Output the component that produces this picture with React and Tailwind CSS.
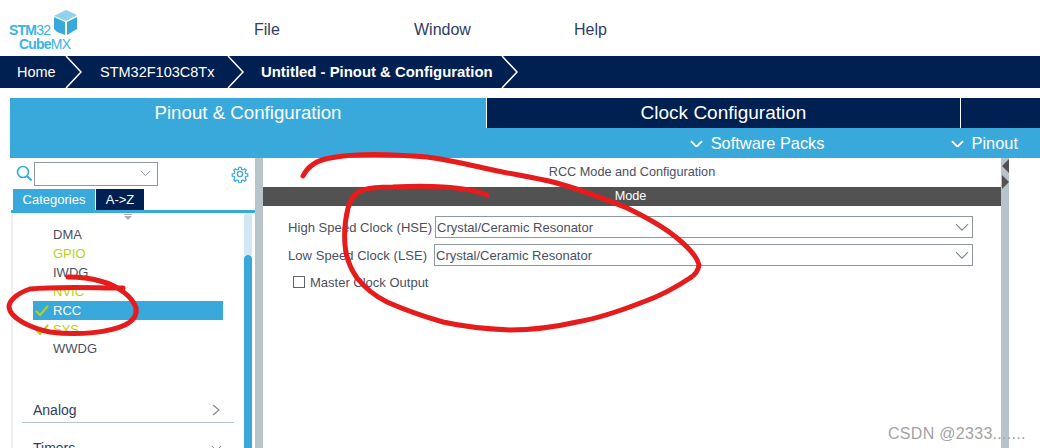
import React from 'react'

const FONT = "font-['Liberation_Sans',Arial,sans-serif]"
const TEXT = 'text-[#4b4f63]'

const Crumb = ({ children, className, bold }) => (
  <div className={`flex items-center h-full pt-[1px] ${className}`}>
    <span className={`text-white whitespace-nowrap ${bold ? 'font-bold text-[14.9px]' : 'text-[14.5px]'}`}>{children}</span>
  </div>
)

const CrumbArrow = () => (
  <svg width="18" height="32" viewBox="0 0 18 32" fill="none" className="shrink-0">
    <path d="M1 0 L16 16 L1 32" stroke="#fff" strokeWidth="1.5" />
  </svg>
)

const Chevron = ({ size = 14, stroke = '#808a90', width = 1.2 }) => (
  <svg width={size} height={size * 0.6} viewBox="0 0 14 8" fill="none" className="shrink-0">
    <path d="M1 1 L7 7 L13 1" stroke={stroke} strokeWidth={width} />
  </svg>
)

const Logo = () => (
  <div className="relative w-[80px] h-[56px] shrink-0">
    <svg width="26" height="36" viewBox="0 0 26 36" className="absolute left-[53px] top-[9px]">
      <path d="M1 7 L13 1 L24 6 L13 12 Z" fill="#8fd2ef" />
      <path d="M1 8 L12 13 L12 26 L4 23 L1 20 Z" fill="#39a9dc" />
      <path d="M14 13 L24 8 L24 20 L14 26 Z" fill="#39a9dc" />
    </svg>
    <div className="absolute left-[9px] top-[22px] text-[#39b4e6] text-[14px] leading-[16px] tracking-[-0.8px] whitespace-nowrap">
      <span className="font-bold">STM</span><span>32</span>
    </div>
    <div className="absolute left-[19px] top-[36px] text-[#39b4e6] text-[14px] leading-[16px] tracking-[-0.8px] whitespace-nowrap">
      <span className="font-bold">Cube</span><span>MX</span>
    </div>
  </div>
)

const ListItem = ({ label, color = TEXT, selected, check }) => (
  <div className={`relative h-[19px] w-[190px] ml-[20px] pl-[20px] flex items-center text-[13px] ${color} ${selected ? 'bg-[#39a9dc]' : ''}`}>
    {check && (
      <svg width="14" height="12" viewBox="0 0 14 12" fill="none" className="absolute left-[2px] top-[4px]">
        <path d="M1 6 L5 10 L13 1" stroke="#b5d312" strokeWidth="2" />
      </svg>
    )}
    {label}
  </div>
)

const SelectRow = ({ label, selectClass }) => (
  <div className="flex items-center h-[22px]">
    <span className={`pl-[25px] pt-[1px] text-[13px] tracking-[0.05px] whitespace-nowrap ${TEXT} ${selectClass}`}>{label}</span>
    <div className={`flex items-center justify-between flex-1 mr-[28px] h-[22px] border border-[#8f989e] bg-white pl-[1px] pr-[3px] pt-[1px] text-[13px] ${TEXT}`}>
      <span>Crystal/Ceramic Resonator</span>
      <Chevron />
    </div>
  </div>
)

const App = () => {
  return (
    <div className={`relative w-[1040px] h-[448px] overflow-hidden bg-white ${FONT}`}>
      {/* top menu */}
      <div className="flex items-center h-[56px]">
        <Logo />
        <div className="flex items-center pl-[174px] pt-[4px] text-[16px] text-[#2f3d63]">
          <span className="w-[160px]">File</span>
          <span className="w-[160px]">Window</span>
          <span>Help</span>
        </div>
      </div>

      {/* breadcrumb */}
      <div className="flex items-center h-[32px] bg-[#002052]">
        <Crumb className="pl-[17px] w-[65px]">Home</Crumb>
        <CrumbArrow />
        <Crumb className="pl-[17px] w-[144px]">STM32F103C8Tx</Crumb>
        <CrumbArrow />
        <Crumb bold className="pl-[16px] w-[256px]">Untitled - Pinout &amp; Configuration</Crumb>
        <CrumbArrow />
      </div>

      {/* tabs */}
      <div className="ml-[10px] mt-[10px]">
        <div className="flex h-[30px]">
          <div className="w-[476px] pt-[1px] bg-[#39a9dc] text-white text-[18.7px] flex items-center justify-center">Pinout &amp; Configuration</div>
          <div className="w-[474px] pt-[1px] bg-[#002052] text-white text-[19px] flex items-center justify-center border-l border-white">Clock Configuration</div>
          <div className="flex-1 bg-[#002052] border-l border-white" />
        </div>
        <div className="flex items-center justify-end h-[30px] pt-[1px] bg-[#39a9dc] text-white text-[16.4px]">
          <Chevron stroke="#fff" width={2} size={13} />
          <span className="ml-[8px] mr-[126px]">Software Packs</span>
          <Chevron stroke="#fff" width={2} size={13} />
          <span className="ml-[8px] mr-[22px]">Pinout</span>
        </div>
      </div>

      {/* body */}
      <div className="flex ml-[10px] h-[290px]">
        {/* left panel */}
        <div className="w-[245px] shrink-0">
          <div className="flex items-center h-[31px] pl-[6px]">
            <svg width="17" height="17" viewBox="0 0 17 17" fill="none" className="shrink-0">
              <circle cx="7" cy="7" r="5.5" stroke="#39a9dc" strokeWidth="1.6" />
              <path d="M11 11 L15.5 15.5" stroke="#39a9dc" strokeWidth="2" />
            </svg>
            <div className="flex items-center justify-end w-[124px] h-[24px] ml-[1px] border border-[#8f989e] pr-[6px]">
              <Chevron size={11} />
            </div>
            <svg width="18" height="18" viewBox="0 0 24 24" fill="none" stroke="#39a9dc" strokeWidth="1.8" className="ml-[73px] shrink-0">
              <circle cx="12" cy="12" r="3.5" />
              <path d="M10.3 2h3.4l.5 3 2.2.9 2.5-1.7 2.4 2.4-1.7 2.5.9 2.2 3 .5v3.4l-3 .5-.9 2.2 1.7 2.5-2.4 2.4-2.5-1.7-2.2.9-.5 3h-3.4l-.5-3-2.2-.9-2.5 1.7-2.4-2.4 1.7-2.5-.9-2.2-3-.5v-3.4l3-.5.9-2.2-1.7-2.5 2.4-2.4 2.5 1.7 2.2-.9z" transform="translate(1.2 1.2) scale(.9)" />
            </svg>
          </div>
          <div className="flex h-[21px] pl-[3px] text-[13px] text-white">
            <div className="w-[82px] bg-[#39a9dc] flex items-center justify-center">Categories</div>
            <div className="w-[48px] ml-[1px] bg-[#002052] flex items-center justify-center">A-&gt;Z</div>
          </div>
          <div className="ml-[1px] h-[3px] bg-[#39a9dc]" />
          <div className="relative flex h-[235px] ml-[1px] border-l-2 border-[#eeeeee]">
            <div className="flex-1 relative">
              <div className="flex justify-center w-[230px] h-[12px] pt-[1px]">
                <div className="flex flex-col items-center">
                  <div className="w-[8px] h-[1px] bg-[#b0b0b0]" />
                  <div className="w-0 h-0 mt-[1px] border-x-[4px] border-x-transparent border-t-[4px] border-t-[#b0b0b0]" />
                </div>
              </div>
              <ListItem label="DMA" />
              <ListItem label="GPIO" color="text-[#b5d312]" />
              <ListItem label="IWDG" />
              <ListItem label="NVIC" color="text-[#b5d312]" />
              <ListItem label="RCC" color="text-white" selected check />
              <ListItem label="SYS" color="text-[#b5d312]" check />
              <ListItem label="WWDG" />
              <div className="flex items-center justify-between h-[23px] mt-[42px] ml-[9px] pl-[11px] pr-[14px] pb-[2px] w-[212px] border-b border-[#b8c4cb] text-[14px] text-[#2f3d63]">
                <span>Analog</span>
                <svg width="8" height="12" viewBox="0 0 8 12" fill="none">
                  <path d="M1 1 L7 6 L1 11" stroke="#808a90" strokeWidth="1.2" />
                </svg>
              </div>
              <div className="flex items-center justify-between mt-[15px] ml-[9px] w-[212px] pl-[11px] pr-[12px] text-[14px] text-[#2f3d63]">
                <span>Timers</span>
                <Chevron size={11} />
              </div>
            </div>
            <div className="w-[8px] shrink-0 mr-[3px] flex flex-col">
              <div className="h-[42px] bg-[#d4e6f5] rounded-t-[4px]" />
              <div className="flex-1 bg-[#39a9dc] rounded-t-[4px]" />
            </div>
          </div>
        </div>

        {/* divider */}
        <div className="w-[8px] shrink-0 bg-[#b8c4cb]" />

        {/* right panel */}
        <div className="w-[738px] shrink-0">
          <div className={`flex items-center justify-center h-[29px] pt-[1px] text-[12.7px] ${TEXT}`}>RCC Mode and Configuration</div>
          <div className="flex items-center justify-center h-[19px] pr-[3px] bg-[#525252] text-white text-[12.7px]">Mode</div>
          <div className="flex flex-col gap-[6px] mt-[10px]">
            <SelectRow label="High Speed Clock (HSE)" selectClass="w-[172px]" />
            <SelectRow label="Low Speed Clock (LSE)" selectClass="w-[171px]" />
          </div>
          <label className={`flex items-center gap-[5px] mt-[5px] ml-[30px] h-[22px] text-[13px] ${TEXT}`}>
            <span className="w-[12px] h-[12px] border border-[#5f6468] bg-white" />
            <span className="pt-[1px]">Master Clock Output</span>
          </label>
        </div>

        {/* right scrollbar */}
        <div className="relative w-[8px] shrink-0 bg-[#b8c4cb]">
          <div className="absolute left-[1px] top-[1px] w-0 h-0 border-y-[7px] border-y-transparent border-r-[7px] border-r-[#525252]" />
          <div className="absolute left-[1px] top-[17px] w-0 h-0 border-y-[7px] border-y-transparent border-l-[7px] border-l-[#525252]" />
        </div>
      </div>

      {/* red pen marks on top of the screenshot */}
      <svg width="1040" height="448" viewBox="0 0 1040 448" fill="none" className="absolute left-0 top-0 pointer-events-none">
        <path
          d="M303 176 C308 166 318 160 330 158 C350 154 380 153 427 157 C450 160 470 165 493 170 C515 175 540 178 560 184 C585 191 605 199 627 208 C650 219 665 228 677 238 C688 247 697 256 699 265 C698 272 695 275 690 278 C675 288 660 296 643 302 C620 311 600 318 577 322 C555 327 535 330 510 330 C487 329 465 327 443 322 C422 316 405 310 387 302 C375 296 365 288 357 278 C350 268 346 257 345 245 C344 232 345 220 348 208 C351 198 356 192 363 190 C372 187 382 187 393 187 C412 186 430 186 443 187 C460 188 475 190 487 195"
          stroke="#e61c1c"
          strokeWidth="5"
          strokeLinecap="round"
        />
        <path
          d="M123 288 C95 288 60 286 30 289 C18 293 9 300 9 307 C10 318 30 328 50 332 C80 336 110 332 125 325 C135 320 137 314 136 308 C133 298 120 286 100 281 C90 278 78 277 68 277"
          stroke="#e61c1c"
          strokeWidth="5"
          strokeLinecap="round"
        />
      </svg>

      {/* watermark */}
      <div className="absolute left-[888px] top-[422px] text-[16px] tracking-[0.3px] text-[#a3a3a3] whitespace-nowrap">CSDN @2333.......</div>
    </div>
  )
}

export default App
